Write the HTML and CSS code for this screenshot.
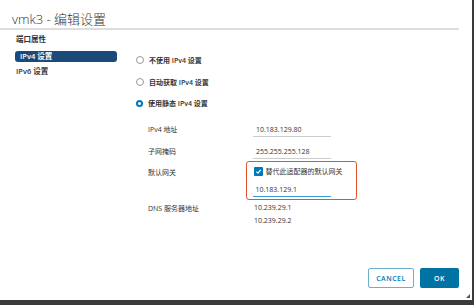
FILE: index.html
```html
<!DOCTYPE html>
<html>
<head>
    <meta charset="UTF-8">
    <title>vmk3 - 编辑设置</title>
    <link rel="stylesheet" href="styles.css">
</head>
<body>
    <div class="dialog">
        <h2 class="title">vmk3 - 编辑设置</h2>
        <div class="main">
            <div class="nav">
                <div class="nav-item">端口属性</div>
                <div class="nav-item active">IPv4 设置</div>
                <div class="nav-item">IPv6 设置</div>
            </div>
            <div class="content">
                <div class="radio"><span class="dot"></span>不使用 IPv4 设置</div>
                <div class="radio"><span class="dot"></span>自动获取 IPv4 设置</div>
                <div class="radio"><span class="dot on"></span>使用静态 IPv4 设置</div>

                <div class="form">
                    <div class="row">
                        <div class="label">IPv4 地址</div>
                        <div class="field">10.183.129.80</div>
                    </div>
                    <div class="row">
                        <div class="label">子网掩码</div>
                        <div class="field">255.255.255.128</div>
                    </div>
                    <div class="row gw">
                        <div class="label">默认网关</div>
                        <div class="highlight">
                            <div class="check">
                                <span class="box">
                                    <svg width="7" height="7" viewBox="0 0 10 10"><path d="M2 5.2 L4.2 7.4 L8.2 2.8" fill="none" stroke="#fff" stroke-width="1.8"/></svg>
                                </span>替代此适配器的默认网关
                            </div>
                            <div class="field focus">10.183.129.1</div>
                        </div>
                    </div>
                    <div class="row dns">
                        <div class="label">DNS 服务器地址</div>
                        <div class="values">
                            <div>10.239.29.1</div>
                            <div>10.239.29.2</div>
                        </div>
                    </div>
                </div>
            </div>
        </div>
        <div class="footer">
            <button class="btn cancel">CANCEL</button>
            <button class="btn ok">OK</button>
        </div>
        <span class="grip"></span>
    </div>
</body>
</html>
```

FILE: styles.css
```css
body {
    margin: 0;
    width: 474px;
    height: 305px;
    background-color: #3b3b3b;
    font-family: "Open Sans", "Noto Sans CJK SC", sans-serif;
    color: #333;
    overflow: hidden;
}
.dialog {
    position: relative;
    width: 472px;
    height: 300px;
    background-color: #fff;
    box-sizing: border-box;
    padding: 11px 13px 0 12px;
}
.title {
    margin: 0 0 0 -12px;
    padding-left: 12px;
    font-weight: 300;
    font-size: 13px;
    line-height: 17px;
    color: #333;
    border-bottom: 2px solid #ddd;
}
.main {
    display: flex;
    height: 238px;
}
.nav {
    width: 102px;
    padding-top: 4px;
    padding-left: 3px;
}
.nav-item {
    font-size: 7.5px;
    font-weight: 600;
    line-height: 11px;
    padding-left: 1px;
}
.nav-item.active {
    background-color: #1b4a7a;
    color: #fff;
    border-radius: 3px;
    padding-left: 5px;
    line-height: 11px;
    margin: 6px 0 4px 0;
}
.content {
    padding-left: 19px;
    padding-top: 24px;
}
.radio {
    display: flex;
    align-items: center;
    font-size: 7px;
    font-weight: 600;
    height: 12px;
    margin-bottom: 9.5px;
}
.dot {
    width: 6px;
    height: 6px;
    border: 1px solid #999;
    border-radius: 50%;
    margin-right: 5px;
}
.dot.on {
    border: 2.5px solid #0079b8;
    width: 3px;
    height: 3px;
}
.form {
    padding-left: 12px;
    padding-top: 5px;
    font-size: 7px;
}
.row {
    display: flex;
    margin-bottom: 9px;
}
.label {
    width: 105px;
    line-height: 12px;
}
.field {
    width: 75px;
    border-bottom: 1px solid #ccc;
    line-height: 12px;
    padding-left: 3px;
}
.field.focus {
    border-bottom: 1.5px solid #3a9bd5;
}
.row.gw {
    margin-top: -7px;
}
.row.gw .label {
    margin-top: 6px;
}
.highlight {
    width: 111px;
    box-sizing: border-box;
    margin-left: -7px;
    border: 1.5px solid #e2522f;
    border-radius: 3px;
    padding: 4px 0 1.5px 5.5px;
}
.check {
    display: flex;
    align-items: center;
    line-height: 12px;
    margin-bottom: 6.5px;
}
.box {
    display: flex;
    align-items: center;
    justify-content: center;
    width: 9px;
    height: 9px;
    background-color: #0079b8;
    border-radius: 1px;
    margin-left: 1px;
    margin-right: 3px;
}
.row.dns {
    margin-top: -6px;
}
.values {
    margin-top: -2px;
    padding-left: 1px;
}
.values div {
    line-height: 13px;
}
.footer {
    display: flex;
    justify-content: flex-end;
    gap: 6px;
}
.btn {
    font-family: "Open Sans", sans-serif;
    font-size: 7px;
    font-weight: 600;
    letter-spacing: 0.5px;
    height: 20px;
    border-radius: 2px;
    cursor: pointer;
}
.btn.cancel {
    width: 46px;
    background-color: #fff;
    border: 1px solid #6aaed0;
    color: #0079b8;
}
.btn.ok {
    width: 39px;
    background-color: #0072a3;
    border: none;
    color: #fff;
}
.grip {
    position: absolute;
    right: 2px;
    bottom: 2px;
    width: 0;
    height: 0;
    border-left: 4px solid transparent;
    border-bottom: 4px solid #555;
}
```
